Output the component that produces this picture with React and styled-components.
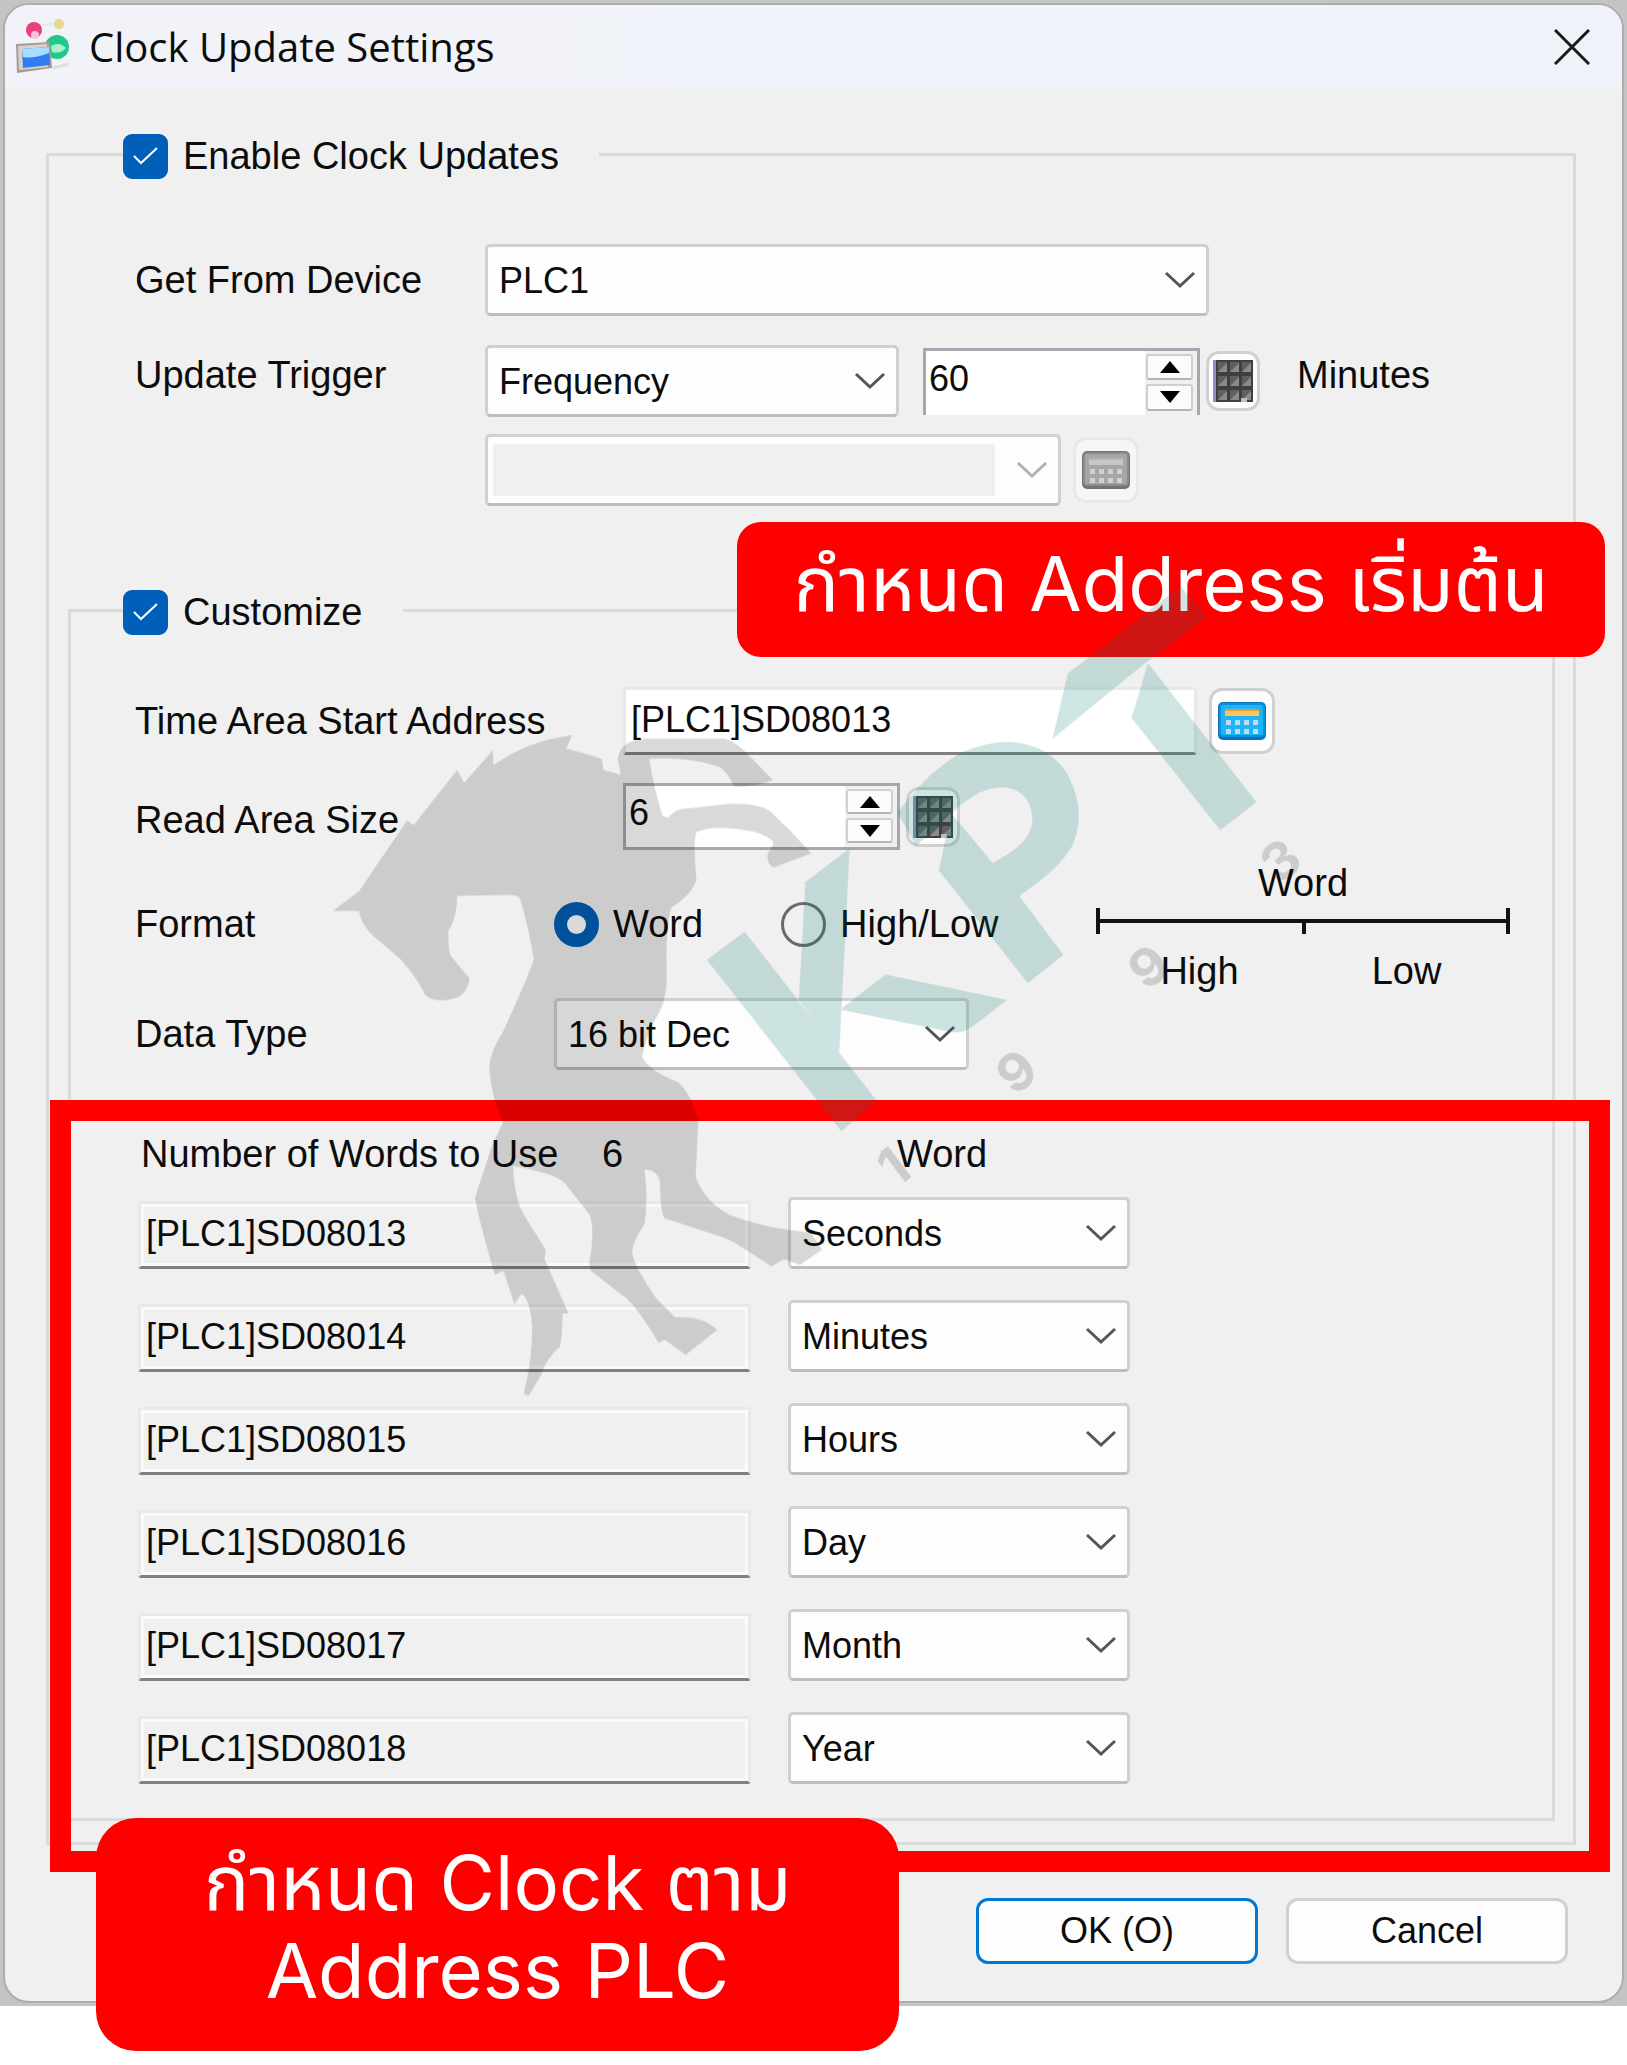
import { useState } from "react";
import styled, { createGlobalStyle } from "styled-components";

const WORDS = [
    { address: '[PLC1]SD08013', unit: 'Seconds' },
    { address: '[PLC1]SD08014', unit: 'Minutes' },
    { address: '[PLC1]SD08015', unit: 'Hours' },
    { address: '[PLC1]SD08016', unit: 'Day' },
    { address: '[PLC1]SD08017', unit: 'Month' },
    { address: '[PLC1]SD08018', unit: 'Year' },
];

const UNITS = WORDS.map((word) => word.unit);

function AppIcon() {
    return (
        <svg width="56" height="60" viewBox="0 0 56 60" aria-hidden="true">
            <path d="M28 8 L42 6" stroke="#d5ecf2" strokeWidth="2" />
            <circle cx="19" cy="13" r="8" fill="#e8417f" />
            <circle cx="20" cy="18" r="4" fill="#fbc4d6" />
            <circle cx="44" cy="7" r="5" fill="#e6d58a" />
            <circle cx="42" cy="30" r="12" fill="#1fc98a" />
            <path d="M36 29 Q44 24 51 31 Q46 37 37 35 Z" fill="#a8f0cf" />
            <path d="M38 51 L54 47" stroke="#dcdee2" strokeWidth="3" />
            <path d="M1 27 L35 25 L37 51 L2 56 Z" fill="#a79d98" />
            <path d="M3 29 L32 27 L33 50 L4 53 Z" fill="#d9d2cc" />
            <path d="M7 32 L34 30 L35 48 L8 51 Z" fill="#2f7df0" />
            <path d="M7 32 L34 30 L34 36 Q18 42 8 40 Z" fill="#a9dcff" />
        </svg>
    );
}

function Chevron({ color = '#555' }) {
    return (
        <svg width="32" height="18" viewBox="0 0 32 18" fill="none" aria-hidden="true">
            <path d="M2 2 L16 15 L30 2" stroke={color} strokeWidth="3" />
        </svg>
    );
}

function KeypadIcon() {
    const cells = [0, 1, 2];
    return (
        <svg width="40" height="42" viewBox="0 0 40 42" aria-hidden="true">
            <rect width="40" height="42" fill="#3f3f42" />
            <rect width="3" height="42" fill="#8d8fc9" />
            {cells.map((r) => cells.map((c) => (
                <g key={`${r}-${c}`}>
                    <rect x={5 + c * 12} y={2 + r * 14} width="9" height="10" fill="#606063" />
                    <path d={`M${5 + c * 12} ${12 + r * 14} h9 v-9 z`} fill="#8b8b8d" />
                </g>
            )))}
            <rect x="28" y="38" width="6" height="4" fill="#c9b9b9" />
        </svg>
    );
}

function CalculatorIcon({ muted }) {
    const body = muted ? '#8b8b8b' : '#0b8fe0';
    const face = muted ? '#a6a6a6' : '#1fb4f7';
    return (
        <svg width="48" height="38" viewBox="0 0 48 38" aria-hidden="true">
            <rect width="48" height="38" rx="5" fill={muted ? '#727272' : '#0873bd'} />
            <rect x="1" y="1" width="46" height="34" rx="4" fill={body} />
            <rect x="3" y="3" width="42" height="30" rx="2" fill={face} />
            <rect x="7" y="7" width="34" height="7" fill={muted ? '#c6c6c6' : '#ffc35a'} />
            <rect x="7" y="7" width="34" height="2" fill={muted ? '#b4b4b4' : '#e89a2c'} />
            {[8, 17, 26, 35].map((x) => (
                <g key={x} fill={muted ? '#d0d0d0' : '#b9def5'}>
                    <rect x={x} y="18" width="5" height="5" />
                    <rect x={x} y="27" width="5" height="5" />
                </g>
            ))}
        </svg>
    );
}

function SelectBox({ id, label, width, options, value, disabled }) {
    return (
        <SelectWrap $width={width}>
            <Select id={id} aria-label={label} defaultValue={value} disabled={disabled}>
                {options.map((option) => <option key={option}>{option}</option>)}
            </Select>
            {disabled && <DisabledFill />}
            <SelectArrow><Chevron color={disabled ? '#b0b0b0' : '#555'} /></SelectArrow>
        </SelectWrap>
    );
}

function Spinner({ id, initial, open }) {
    const [value, setValue] = useState(initial);
    return (
        <SpinBox $open={open}>
            <SpinInput id={id} value={value} onChange={(e) => setValue(e.target.value)} />
            <SpinButtons>
                <SpinButton aria-label="Increase" onClick={() => setValue(v => Number(v) + 1)}>
                    <svg width="20" height="12" viewBox="0 0 20 12"><path d="M0 12 L10 0 L20 12 Z" /></svg>
                </SpinButton>
                <SpinButton aria-label="Decrease" onClick={() => setValue(v => Number(v) - 1)}>
                    <svg width="20" height="12" viewBox="0 0 20 12"><path d="M0 0 L10 12 L20 0 Z" /></svg>
                </SpinButton>
            </SpinButtons>
        </SpinBox>
    );
}

function CheckLegend({ inset, children }) {
    const [checked, setChecked] = useState(true);
    return (
        <Legend $inset={inset}>
            <CheckLabel>
                <CheckCell>
                    <Checkbox checked={checked} onChange={(e) => setChecked(e.target.checked)} />
                    {checked && (
                        <svg width="25" height="18" viewBox="0 0 25 18" fill="none" aria-hidden="true">
                            <path d="M1 9 L8 16 L24 1" stroke="#fff" strokeWidth="2" />
                        </svg>
                    )}
                </CheckCell>
                {children}
            </CheckLabel>
        </Legend>
    );
}

function WordDiagram() {
    return (
        <Diagram>
            <span>Word</span>
            <svg width="100%" height="26" viewBox="0 0 414 26" preserveAspectRatio="none" aria-hidden="true">
                <path d="M2 0 V26 M412 0 V26 M0 13 H414 M208 13 V26" stroke="#111" strokeWidth="4" />
            </svg>
            <DiagramHalves>
                <span>High</span>
                <span>Low</span>
            </DiagramHalves>
        </Diagram>
    );
}

function Watermark() {
    return (
        <WatermarkSvg width="1040" height="850" viewBox="320 570 1040 850" aria-hidden="true">
            <g opacity="0.15">
                <path
                    transform="translate(300 700) scale(0.3571 0.4719)"
                    d="M92 447 L165 405 L300 255 L318 265 L440 148 L460 175 L540 106 L542 138 Q640 85 762 75
                    L745 103 Q810 115 845 125 L850 148 L898 158 L890 125 Q895 80 990 82 L1190 82 Q1215 85 1250 112
                    L1325 170 Q1270 185 1215 183 Q1195 148 1170 140 Q1080 120 978 125 Q990 185 1015 245 L1030 250
                    Q1050 230 1080 230 L1200 220 Q1290 218 1320 238 Q1380 280 1432 325 L1325 355 Q1305 345 1310 325
                    Q1325 310 1325 300 Q1300 280 1240 275 Q1150 265 1110 280 Q1100 300 1110 380 Q1100 410 1040 440
                    Q1022 480 1027 590 Q1025 640 1000 670 Q970 710 958 755 Q975 785 1060 810 Q1100 840 1115 890
                    L1108 1010 Q1130 1060 1200 1090 Q1300 1120 1430 1128 L1462 1165 L1400 1197 L1355 1185 L1320 1200
                    Q1210 1145 1190 1140 L1020 1098 Q1008 1080 1008 1020 Q1000 995 965 995 Q975 1060 965 1110
                    Q930 1150 930 1170 Q935 1200 1000 1270 L1050 1308 Q1130 1305 1168 1335 L1080 1388 L1020 1355
                    L1005 1363 Q930 1270 900 1260 L815 1210 Q805 1195 815 1170 Q825 1100 805 1085 L740 1022
                    Q700 1000 597 988 Q600 1060 630 1095 L688 1165 L685 1185 L752 1300 L735 1300 Q735 1350 728 1370
                    Q690 1395 675 1430 L640 1475 L626 1470 Q650 1400 650 1330 Q645 1270 620 1258 L600 1280 L570 1210
                    L545 1218 Q500 1100 490 1055 L535 950 L568 895 Q535 840 530 780 Q530 750 570 700 Q625 610 655 550
                    Q640 480 615 420 Q610 413 580 413 L440 415 Q440 460 415 490 Q415 540 425 545 L475 590
                    Q470 620 440 630 Q380 645 350 625 Q330 590 280 548 L205 500 Q170 475 165 447 Z"
                />
                <WatermarkDigit transform="translate(893 1166) rotate(-37)">1</WatermarkDigit>
                <WatermarkDigit transform="translate(1016 1071) rotate(-37)">9</WatermarkDigit>
                <WatermarkDigit transform="translate(1148 966) rotate(-37)">9</WatermarkDigit>
                <WatermarkDigit transform="translate(1280 860) rotate(-37)">3</WatermarkDigit>
            </g>
            <g opacity="0.19" fill="#007869" transform="translate(660 560) scale(0.4337 0.4209)">
                <path d="M108 950 L195 883 L500 1285 L418 1357 Z" />
                <path d="M335 765 L437 685 L413 1175 L320 1045 Z" />
                <path d="M415 1068 L520 985 L800 1045 L725 1105 Q700 1125 675 1122 Z" />
                <path d="M548 600 C600 530 640 490 700 455 Q760 430 810 432 Q900 440 940 510 Q985 600 950 680
                    Q920 735 828 798 L930 938 L848 1005 L643 738 L670 600 L767 720 C840 680 860 650 858 610
                    C855 560 820 540 790 540 C750 540 720 560 690 585 L590 680 Z" />
                <path d="M940 270 L1200 62 L1262 135 L1110 252 L905 425 Z" />
                <path d="M1125 245 L1375 575 L1292 642 L1087 375 Z" />
            </g>
        </WatermarkSvg>
    );
}

export default function App() {
    const [format, setFormat] = useState('word');

    return (
        <Page>
            <GlobalStyle />
            <Desktop>
                <Window>
                    <TitleBar>
                        <AppIcon />
                        <Title>Clock Update Settings</Title>
                        <CloseButton aria-label="Close">
                            <svg width="36" height="36" viewBox="0 0 36 36" aria-hidden="true">
                                <path d="M1 1 L35 35 M35 1 L1 35" stroke="#1a1a1a" strokeWidth="3" />
                            </svg>
                        </CloseButton>
                    </TitleBar>

                    <Form onSubmit={(e) => e.preventDefault()}>
                        <OuterGroup>
                            <CheckLegend inset={55}>Enable Clock Updates</CheckLegend>
                            <DeviceRows>
                                <Row $labelWidth={350}>
                                    <Label htmlFor="device">Get From Device</Label>
                                    <SelectBox id="device" width={724} options={['PLC1']} value="PLC1" />
                                </Row>
                                <Row $labelWidth={350} $align="flex-start">
                                    <Label htmlFor="trigger">Update Trigger</Label>
                                    <Controls>
                                        <SelectBox id="trigger" width={414} options={['Frequency']} value="Frequency" />
                                        <SpinGroup $spaced>
                                            <Spinner id="frequency" initial="60" open />
                                            <IconButton type="button" aria-label="Keypad"><KeypadIcon /></IconButton>
                                        </SpinGroup>
                                        <UnitLabel htmlFor="frequency">Minutes</UnitLabel>
                                    </Controls>
                                </Row>
                                <Row $labelWidth={350}>
                                    <span />
                                    <Controls>
                                        <SelectBox label="Trigger address" width={576} options={['']} value="" disabled />
                                        <IconButton type="button" aria-label="Choose trigger address" $wide $muted disabled>
                                            <CalculatorIcon muted />
                                        </IconButton>
                                    </Controls>
                                </Row>
                            </DeviceRows>

                            <InnerGroup>
                                <CheckLegend inset={52}>Customize</CheckLegend>
                                <TimeArea>
                                    <Row $labelWidth={488}>
                                        <Label htmlFor="start">Time Area Start Address</Label>
                                        <Controls>
                                            <TextInput id="start" $width={574} defaultValue="[PLC1]SD08013" />
                                            <IconButton type="button" aria-label="Choose start address" $wide>
                                                <CalculatorIcon />
                                            </IconButton>
                                        </Controls>
                                    </Row>
                                    <FormatArea>
                                        <FormatRows>
                                            <Row $labelWidth={488} $align="flex-end">
                                                <Label htmlFor="size">Read Area Size</Label>
                                                <SpinGroup>
                                                    <Spinner id="size" initial="6" />
                                                    <IconButton type="button" aria-label="Keypad"><KeypadIcon /></IconButton>
                                                </SpinGroup>
                                            </Row>
                                            <Row $labelWidth={419} role="radiogroup" aria-labelledby="format">
                                                <Label as="span" id="format">Format</Label>
                                                <RadioGroup>
                                                    <RadioLabel>
                                                        <Radio
                                                            name="format"
                                                            checked={format === 'word'}
                                                            onChange={() => setFormat('word')}
                                                        />
                                                        Word
                                                    </RadioLabel>
                                                    <RadioLabel>
                                                        <Radio
                                                            name="format"
                                                            checked={format === 'highlow'}
                                                            onChange={() => setFormat('highlow')}
                                                        />
                                                        High/Low
                                                    </RadioLabel>
                                                </RadioGroup>
                                            </Row>
                                            <Row $labelWidth={419}>
                                                <Label htmlFor="type">Data Type</Label>
                                                <SelectBox id="type" width={415} options={['16 bit Dec']} value="16 bit Dec" />
                                            </Row>
                                        </FormatRows>
                                        <WordDiagram />
                                    </FormatArea>
                                </TimeArea>

                                <WordSection>
                                    <RedFrame />
                                    <WordHeader>
                                        <span>Number of Words to Use</span>
                                        <span>6</span>
                                        <span>Word</span>
                                    </WordHeader>
                                    <WordList>
                                        {WORDS.map((word) => (
                                            <WordRow key={word.address}>
                                                <TextInput
                                                    readOnly
                                                    $width={613}
                                                    value={word.address}
                                                    aria-label={`${word.unit} address`}
                                                />
                                                <SelectBox
                                                    label={`Word at ${word.address}`}
                                                    width={342}
                                                    options={UNITS}
                                                    value={word.unit}
                                                />
                                            </WordRow>
                                        ))}
                                    </WordList>
                                </WordSection>
                            </InnerGroup>
                        </OuterGroup>

                        <Footer>
                            <DialogButton type="submit" $primary>OK (O)</DialogButton>
                            <DialogButton type="button">Cancel</DialogButton>
                        </Footer>
                    </Form>
                </Window>
            </Desktop>

            <AddressNote>กำหนด Address เริ่มต้น</AddressNote>
            <ClockNote>กำหนด Clock ตาม Address PLC</ClockNote>
            <Watermark />
        </Page>
    );
}

const GlobalStyle = createGlobalStyle`
    *, *::before, *::after { box-sizing: border-box; }

    body {
        margin: 0;
        background: #fff;
        color: #0c0c0c;
        font-family: "Liberation Sans", Arial, sans-serif;
        font-size: 38px;
        line-height: 46px;
    }

    button, input, select {
        margin: 0;
        color: inherit;
        font-family: inherit;
        font-size: 36px;
    }
`;

/* leaves room under the window for the note that hangs over its edge */
const Page = styled.div`
    position: relative;
    padding-bottom: 60px;
`;

const Desktop = styled.div`
    padding: 3px;
    background-color: #c4c4c4;
`;

const Window = styled.main`
    border: 2px solid #adadad;
    border-radius: 26px;
    background-color: #f0f0f0;
    overflow: hidden;
`;

const TitleBar = styled.header`
    display: flex;
    align-items: center;
    height: 84px;
    padding: 0 32px 0 10px;
    background: linear-gradient(to right, #f2f3f9, #eff3f9);
`;

const Title = styled.h1`
    flex: 1;
    margin: 0 0 0 18px;
    font-family: "Open Sans", "Noto Sans", sans-serif;
    font-size: 40px;
    font-weight: 400;
`;

const CloseButton = styled.button`
    display: flex;
    padding: 0;
    border: none;
    background: none;
    cursor: pointer;
`;

const Form = styled.form`
    padding: 40px 46px 37px 41px;
`;

const OuterGroup = styled.fieldset`
    min-width: 0;
    margin: 0;
    padding: 0 18px 21px 19px;
    border: 3px solid #dadada;
`;

const InnerGroup = styled(OuterGroup)`
    margin-top: 79px;
    padding: 0 0 34px;
`;

const Legend = styled.legend`
    margin-left: ${props => props.$inset}px;
    padding: 4px 40px 0 0;
`;

const CheckLabel = styled.label`
    display: flex;
    align-items: center;
    gap: 15px;
`;

const CheckCell = styled.span`
    display: grid;
    place-items: center;

    > * { grid-area: 1 / 1; }
    svg { pointer-events: none; }
`;

const Checkbox = styled.input.attrs({ type: 'checkbox' })`
    appearance: none;
    width: 45px;
    height: 45px;
    border: 2px solid #005fb8;
    border-radius: 9px;

    &:checked { background-color: #005fb8; }
`;

const DeviceRows = styled.div`
    display: grid;
    gap: 17px;
    padding: 65px 0 0 67px;

    > :first-child { margin-bottom: 12px; }
`;

const Row = styled.div`
    display: grid;
    grid-template-columns: ${props => props.$labelWidth}px 1fr;
    align-items: ${props => props.$align || 'center'};
`;

const Label = styled.label`
    line-height: 60px;
    white-space: nowrap;
`;

const UnitLabel = styled(Label)`
    align-self: flex-start;
    margin-left: 25px;
`;

const Controls = styled.div`
    display: flex;
    align-items: center;
    gap: 12px;
`;

const SpinGroup = styled.div`
    display: flex;
    align-items: center;
    gap: 6px;
    margin-left: ${props => (props.$spaced ? 12 : 0)}px;
`;

const SelectWrap = styled.div`
    position: relative;
    width: ${props => props.$width}px;
    height: 72px;
`;

const Select = styled.select`
    appearance: none;
    width: 100%;
    height: 100%;
    padding: 0 60px 0 11px;
    border: 3px solid #d0d0d0;
    border-bottom-color: #bdbdbd;
    border-radius: 5px;
    background-color: #fdfdfd;
    opacity: 1;
`;

const DisabledFill = styled.span`
    position: absolute;
    inset: 10px 66px 10px 8px;
    background-color: #f0f0f0;
`;

const SelectArrow = styled.span`
    position: absolute;
    top: 0;
    right: 13px;
    bottom: 0;
    display: flex;
    align-items: center;
    pointer-events: none;
`;

const SpinBox = styled.div`
    display: flex;
    width: 277px;
    height: 67px;
    border: 3px solid #a6a6ae;
    border-bottom-width: ${props => (props.$open ? 0 : 3)}px;
    background-color: #f0f0f0;
`;

const SpinInput = styled.input`
    flex: 1;
    min-width: 0;
    padding: 0 0 8px 3px;
    border: none;
    background-color: #fff;
`;

const SpinButtons = styled.div`
    display: grid;
    gap: 4px;
    width: 52px;
    padding: 3px 4px 4px 1px;
`;

const SpinButton = styled.button.attrs({ type: 'button' })`
    display: grid;
    place-items: center;
    padding: 0;
    border: 2px solid #cfcfcf;
    border-bottom-color: #b4b4b4;
    border-radius: 3px;
    background-color: #fbfbfb;
`;

const IconButton = styled.button`
    display: grid;
    place-items: center;
    width: ${props => (props.$wide ? 66 : 54)}px;
    height: ${props => (props.$wide ? 66 : 60)}px;
    padding: 0;
    border: 3px solid ${props => (props.$muted ? '#e8e8e8' : '#d0d0d0')};
    border-radius: 13px;
    background-color: ${props => (props.$muted ? '#f6f6f6' : '#fdfdfd')};
`;

const TextInput = styled.input`
    width: ${props => props.$width}px;
    height: 68px;
    padding: 0 5px 2px;
    border: 3px solid #e9e9e9;
    border-bottom-color: #808080;
    border-radius: 3px;
    background-color: #fff;

    &:read-only {
        background-color: #f0f0f0;
        box-shadow: inset 0 0 0 3px #fafafa;
    }
`;

const TimeArea = styled.div`
    display: grid;
    gap: 28px;
    padding: 52px 0 0 64px;
`;

const FormatArea = styled.div`
    display: grid;
    grid-template-columns: 961px 414px;
    align-items: center;
`;

const FormatRows = styled.div`
    display: grid;
    gap: 44px;
`;

const RadioGroup = styled.div`
    display: flex;
    gap: 78px;
`;

const RadioLabel = styled.label`
    display: flex;
    align-items: center;
    gap: 14px;
`;

const Radio = styled.input.attrs({ type: 'radio' })`
    appearance: none;
    width: 45px;
    height: 45px;
    border: 3px solid #6a6a6a;
    border-radius: 50%;

    &:checked {
        border: 13px solid #005fb8;
        background-color: #fff;
    }
`;

const Diagram = styled.div`
    display: grid;
    justify-items: center;
    gap: 2px;
`;

const DiagramHalves = styled.div`
    display: grid;
    grid-template-columns: 1fr 1fr;
    justify-items: center;
    width: 100%;
    margin-top: 12px;
`;

const WordSection = styled.section`
    position: relative;
    margin-top: 61px;
    padding-left: 67px;
`;

const RedFrame = styled.div`
    position: absolute;
    inset: -31px -58px -88px -21px;
    border: 21px solid #ff0000;
    pointer-events: none;
`;

const WordHeader = styled.div`
    display: grid;
    grid-template-columns: 461px 295px auto;
    justify-content: start;
    padding-left: 3px;
    white-space: nowrap;
`;

const WordList = styled.div`
    display: grid;
    gap: 31px;
    margin-top: 20px;
`;

const WordRow = styled.div`
    display: flex;
    align-items: flex-end;
    gap: 37px;
`;

const Footer = styled.footer`
    display: flex;
    justify-content: flex-end;
    gap: 28px;
    margin-top: 53px;
    padding-right: 8px;
`;

const DialogButton = styled.button`
    width: 282px;
    height: 66px;
    border: 3px solid ${props => (props.$primary ? '#0078d4' : '#d0d0d0')};
    border-radius: 12px;
    background-color: #fdfdfd;
    cursor: pointer;
`;

const Note = styled.div`
    position: absolute;
    background-color: #ff0000;
    color: #fff;
    font-family: Inter, "Noto Sans Thai", sans-serif;
    font-size: 76px;
    line-height: 88px;
    text-align: center;
`;

const AddressNote = styled(Note)`
    top: 522px;
    right: 22px;
    width: 868px;
    padding: 17px 0 30px;
    border-radius: 24px;
    white-space: nowrap;
`;

const ClockNote = styled(Note)`
    bottom: 15px;
    left: 96px;
    width: 803px;
    padding: 20px 80px 37px;
    border-radius: 40px;
`;

const WatermarkSvg = styled.svg`
    position: absolute;
    top: 570px;
    left: 320px;
    pointer-events: none;
`;

const WatermarkDigit = styled.text`
    font-family: Inter, "Liberation Sans", sans-serif;
    font-size: 54px;
    font-weight: 700;
    text-anchor: middle;
    dominant-baseline: central;
`;
